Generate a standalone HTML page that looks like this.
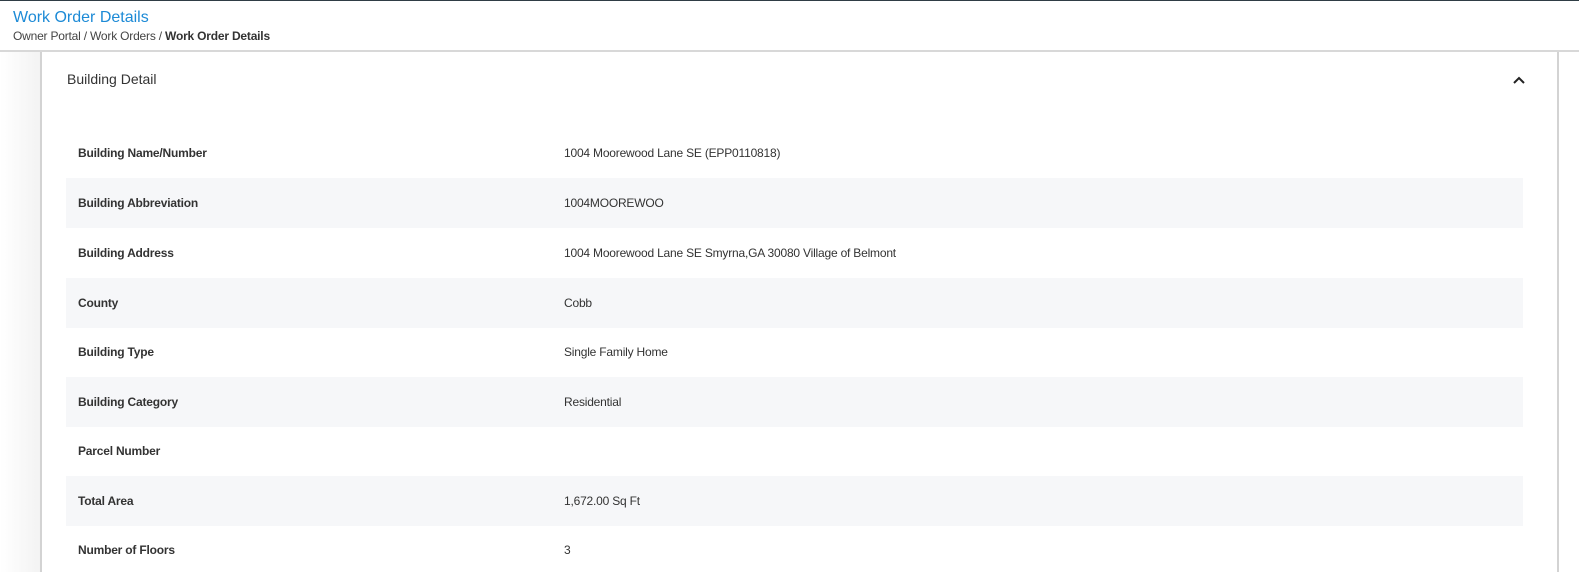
<!DOCTYPE html>
<html><head><style>
*{margin:0;padding:0;box-sizing:border-box}
body{width:1579px;height:572px;overflow:hidden;background:#fff;font-family:"Liberation Sans",sans-serif;position:relative}
.top{position:absolute;top:0;left:0;right:0;height:1px;background:#2f3d45}
.hdr{position:absolute;top:1px;left:0;right:0;height:51px;background:#fff;border-bottom:2px solid #d8d8d8}
.t{position:absolute;left:13px;top:8px;font-size:16px;color:#1c8ad6}
.bc{position:absolute;left:13px;top:28px;font-size:12px;color:#444;letter-spacing:-0.2px}
.bc b{color:#333}
.side{position:absolute;top:52px;left:0;width:40px;bottom:0;background:linear-gradient(to right,#fff,#f3f3f3)}
.card{position:absolute;top:52px;left:40px;width:1519px;bottom:0;border-left:2px solid #d3d3d3;border-right:2px solid #d3d3d3}
.h{position:absolute;left:25px;top:19px;font-size:14px;color:#333}
.chev{position:absolute;left:1470px;top:23px}
.row{position:absolute;left:24px;width:1457px;height:50px;font-size:12px;color:#333;letter-spacing:-0.2px}
.row.g{background:#f6f7f9}
.row .l{position:absolute;left:12px;top:18px;font-weight:bold;color:#333}
.row .v{position:absolute;left:498px;top:18px}
</style></head><body>
<div class="top"></div>
<div class="hdr"><div class="t">Work Order Details</div><div class="bc">Owner Portal / Work Orders / <b>Work Order Details</b></div></div>
<div class="side"></div>
<div class="card">
<div class="h">Building Detail</div>
<svg class="chev" width="14" height="10" viewBox="0 0 14 10"><path d="M2 8 L7 3 L12 8" stroke="#222" stroke-width="2" fill="none"/></svg>
<div class="row" style="top:76px"><span class="l">Building Name/Number</span><span class="v">1004 Moorewood Lane SE (EPP0110818)</span></div>
<div class="row g" style="top:126px"><span class="l">Building Abbreviation</span><span class="v">1004MOOREWOO</span></div>
<div class="row" style="top:176px"><span class="l">Building Address</span><span class="v">1004 Moorewood Lane SE Smyrna,GA 30080 Village of Belmont</span></div>
<div class="row g" style="top:226px"><span class="l">County</span><span class="v">Cobb</span></div>
<div class="row" style="top:275px"><span class="l">Building Type</span><span class="v">Single Family Home</span></div>
<div class="row g" style="top:325px"><span class="l">Building Category</span><span class="v">Residential</span></div>
<div class="row" style="top:374px"><span class="l">Parcel Number</span><span class="v"></span></div>
<div class="row g" style="top:424px"><span class="l">Total Area</span><span class="v">1,672.00 Sq Ft</span></div>
<div class="row" style="top:473px"><span class="l">Number of Floors</span><span class="v">3</span></div>
</div>
</body></html>
